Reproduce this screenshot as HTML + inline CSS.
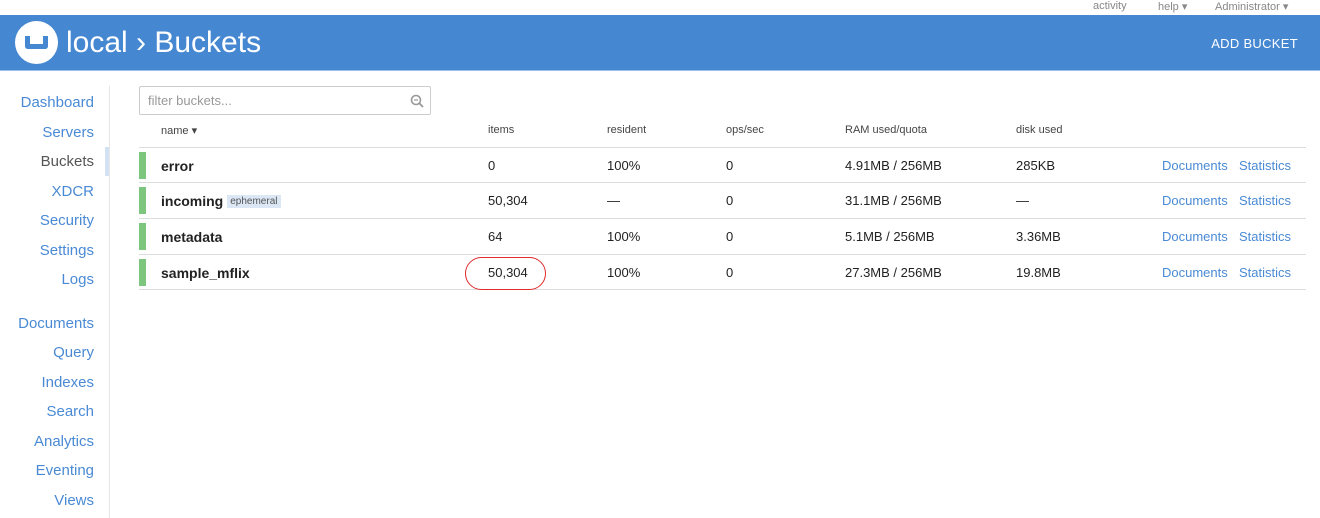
<!DOCTYPE html>
<html><head><meta charset="utf-8"><style>
*{margin:0;padding:0;box-sizing:border-box}
body{width:1320px;height:518px;overflow:hidden;background:#fff;font-family:"Liberation Sans","DejaVu Sans",sans-serif;position:relative;color:#222}
.top{position:absolute;top:0;font-size:11px;color:#888}
.hdr{position:absolute;left:0;top:15px;width:1320px;height:56px;background:#4587d1;border-bottom:1px solid #9cc0ea}
.logo{position:absolute;left:15px;top:6px;width:43px;height:43px;border-radius:50%;background:#fff}
.logo div{position:absolute;left:10px;top:15px;width:23px;height:13px;border:5px solid #4587d1;border-top:none;border-radius:0 0 3px 3px}
.title{position:absolute;left:66px;top:8px;color:#fff;font-size:30px;line-height:40px}
.add{position:absolute;right:22px;top:21px;color:#fff;font-size:13px;letter-spacing:.3px}
.side{position:absolute;left:0;top:88px;width:94px;text-align:right;font-size:15px;color:#4a8ad4}
.side div{height:29.5px;line-height:29.5px}
.vline{position:absolute;left:109px;top:86px;width:1px;height:432px;background:#e6e6e6}
.act{position:absolute;left:105px;top:147px;width:4px;height:29px;background:#d3e2f3}
.filter{position:absolute;left:139px;top:86px;width:292px;height:29px;border:1px solid #ccc;border-radius:2px;font-size:13px;color:#999;padding:6px 8px}
.th{position:absolute;top:124px;font-size:11px;color:#444}
.row{position:absolute;left:139px;width:1167px;height:36px;border-top:1px solid #ddd;font-size:13px}
.row .bar{position:absolute;left:0;top:4px;width:7px;height:27px;background:#7dc67d}
.row>span{position:absolute;top:10px}
.nm{font-weight:bold;font-size:14px;left:22px}
.lk{color:#4a8ad4}
.tag{font-size:10px;background:#dbe7f5;color:#555;padding:1px 3px;font-weight:normal;margin-left:4px;position:relative;top:-2px}
.circ{position:absolute;left:465px;top:257px;width:81px;height:33px;border:1.5px solid #e02b2b;border-radius:17px}
</style></head><body>
<div class="top" style="left:1093px">activity</div>
<div class="top" style="left:1158px">help ▾</div>
<div class="top" style="left:1215px">Administrator ▾</div>
<div class="hdr"><div class="logo"><div></div></div><div class="title">local › Buckets</div><div class="add">ADD BUCKET</div></div>
<div class="side">
<div>Dashboard</div><div>Servers</div><div style="color:#555">Buckets</div><div>XDCR</div><div>Security</div><div>Settings</div><div>Logs</div>
<div style="height:14px"></div>
<div>Documents</div><div>Query</div><div>Indexes</div><div>Search</div><div>Analytics</div><div>Eventing</div><div>Views</div>
</div>
<div class="vline"></div><div class="act"></div>
<div class="filter">filter buckets...<svg style="position:absolute;right:6px;top:7px" width="14" height="14" viewBox="0 0 14 14"><circle cx="6" cy="6" r="4.5" fill="none" stroke="#999" stroke-width="1.6"/><line x1="9.3" y1="9.3" x2="13" y2="13" stroke="#999" stroke-width="1.8"/><line x1="4" y1="6" x2="8" y2="6" stroke="#999" stroke-width="1.2"/></svg></div>
<div class="th" style="left:161px">name ▾</div>
<div class="th" style="left:488px">items</div>
<div class="th" style="left:607px">resident</div>
<div class="th" style="left:726px">ops/sec</div>
<div class="th" style="left:845px">RAM used/quota</div>
<div class="th" style="left:1016px">disk used</div>
<div class="row" style="top:147px"><div class="bar"></div><span class="nm">error</span><span style="left:349px">0</span><span style="left:468px">100%</span><span style="left:587px">0</span><span style="left:706px">4.91MB / 256MB</span><span style="left:877px">285KB</span><span class="lk" style="left:1023px">Documents</span><span class="lk" style="left:1100px">Statistics</span></div>
<div class="row" style="top:182px"><div class="bar"></div><span class="nm">incoming<span class="tag">ephemeral</span></span><span style="left:349px">50,304</span><span style="left:468px">—</span><span style="left:587px">0</span><span style="left:706px">31.1MB / 256MB</span><span style="left:877px">—</span><span class="lk" style="left:1023px">Documents</span><span class="lk" style="left:1100px">Statistics</span></div>
<div class="row" style="top:218px"><div class="bar"></div><span class="nm">metadata</span><span style="left:349px">64</span><span style="left:468px">100%</span><span style="left:587px">0</span><span style="left:706px">5.1MB / 256MB</span><span style="left:877px">3.36MB</span><span class="lk" style="left:1023px">Documents</span><span class="lk" style="left:1100px">Statistics</span></div>
<div class="row" style="top:254px;border-bottom:1px solid #ddd"><div class="bar"></div><span class="nm">sample_mflix</span><span style="left:349px">50,304</span><span style="left:468px">100%</span><span style="left:587px">0</span><span style="left:706px">27.3MB / 256MB</span><span style="left:877px">19.8MB</span><span class="lk" style="left:1023px">Documents</span><span class="lk" style="left:1100px">Statistics</span></div>
<div class="circ"></div>
</body></html>
